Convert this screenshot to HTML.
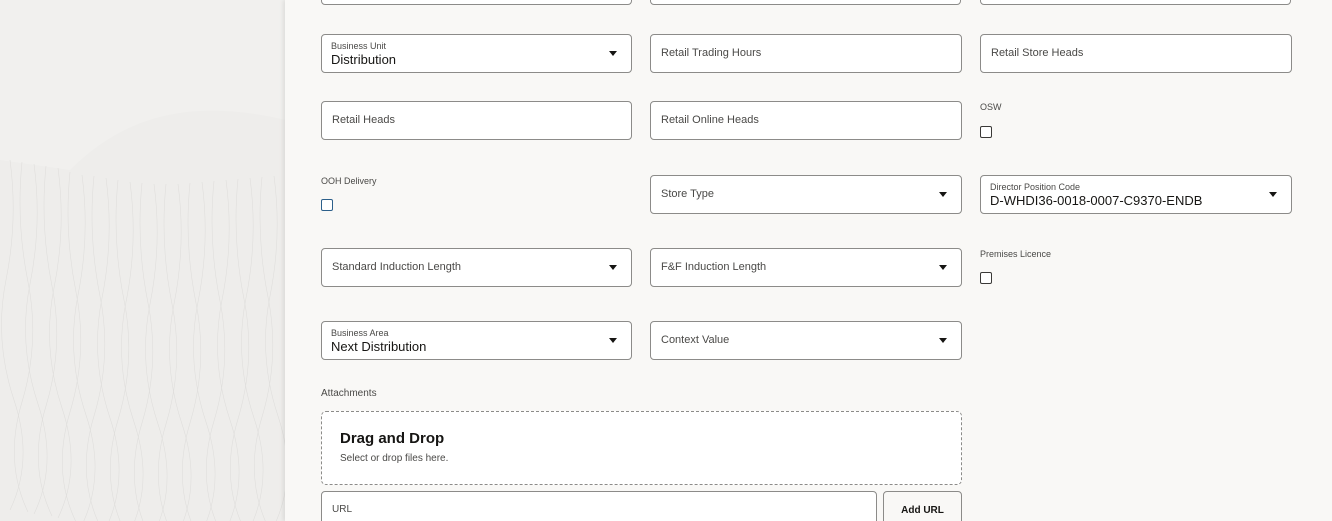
<!DOCTYPE html>
<html><head><meta charset="utf-8"><style>
*{box-sizing:border-box;margin:0;padding:0}
html{width:1332px;height:521px;overflow:hidden}
body{width:1332px;height:521px;overflow:hidden;background:#f1f0ee;font-family:"Liberation Sans",sans-serif;position:relative;color:#161513}
.bg{position:absolute;left:0;top:0;width:286px;height:521px;overflow:hidden}
.panel{position:absolute;left:285px;top:0;width:1047px;height:521px;background:#f9f8f6;box-shadow:-2px 0 4px rgba(0,0,0,.08)}
.f{position:absolute;height:39px;width:311px;background:#fff;border:1px solid #8c8b89;border-radius:4px}
.f .ph{position:absolute;left:10px;top:12px;font-size:11px;color:#4a4947}
.f .lb{position:absolute;left:9px;top:6px;font-size:9px;color:#4a4947}
.f .v{position:absolute;left:9px;top:17px;font-size:13px;color:#161513}
.f .ar{position:absolute;right:14px;top:16px;width:0;height:0;border-left:4.5px solid transparent;border-right:4.5px solid transparent;border-top:5px solid #161513}
.cl{position:absolute;font-size:9px;color:#4a4947}
.cb{position:absolute;width:12px;height:12px;border:1.5px solid #3a3937;border-radius:2px;background:#fff}
</style></head><body>
<div class="bg">
<svg width="286" height="521" viewBox="0 0 286 521">
<path d="M70 170 C130 110 200 100 286 120 L286 521 L0 521 L0 160Z" fill="#eeedeb"/>
<g fill="none" stroke="#dedddb" stroke-width="0.6" opacity="0.9">
<path d="M10 160 q8 60 -4 120 t8 120 t-4 110"/>
<path d="M22 162 q-6 60 6 120 t-6 120 t6 110"/>
<path d="M34 164 q8 60 -4 120 t8 120 t-4 110"/>
<path d="M46 166 q-6 60 6 120 t-6 120 t6 110"/>
<path d="M58 168 q8 60 -4 120 t8 120 t-4 110"/>
<path d="M70 172 q-6 60 6 120 t-6 120 t6 110"/>
<path d="M82 175 q8 60 -4 120 t8 120 t-4 110"/>
<path d="M94 176 q-6 60 6 120 t-6 120 t6 110"/>
<path d="M106 178 q8 60 -4 120 t8 120 t-4 110"/>
<path d="M118 180 q-6 60 6 120 t-6 120 t6 110"/>
<path d="M130 182 q8 60 -4 120 t8 120 t-4 110"/>
<path d="M142 183 q-6 60 6 120 t-6 120 t6 110"/>
<path d="M154 184 q8 60 -4 120 t8 120 t-4 110"/>
<path d="M166 184 q-6 60 6 120 t-6 120 t6 110"/>
<path d="M178 184 q8 60 -4 120 t8 120 t-4 110"/>
<path d="M190 183 q-6 60 6 120 t-6 120 t6 110"/>
<path d="M202 182 q8 60 -4 120 t8 120 t-4 110"/>
<path d="M214 181 q-6 60 6 120 t-6 120 t6 110"/>
<path d="M226 180 q8 60 -4 120 t8 120 t-4 110"/>
<path d="M238 179 q-6 60 6 120 t-6 120 t6 110"/>
<path d="M250 178 q8 60 -4 120 t8 120 t-4 110"/>
<path d="M262 177 q-6 60 6 120 t-6 120 t6 110"/>
<path d="M274 176 q8 60 -4 120 t8 120 t-4 110"/>
</g>
</svg>
</div>
<div class="panel"></div>

<div class="f" style="left:321px;top:-34px"></div>
<div class="f" style="left:650px;top:-34px"></div>
<div class="f" style="left:980px;top:-34px"></div>

<div class="f" style="left:321px;top:34px"><span class="lb">Business Unit</span><span class="v">Distribution</span><i class="ar"></i></div>
<div class="f" style="left:650px;top:34px;width:312px"><span class="ph">Retail Trading Hours</span></div>
<div class="f" style="left:980px;top:34px;width:312px"><span class="ph">Retail Store Heads</span></div>

<div class="f" style="left:321px;top:101px"><span class="ph">Retail Heads</span></div>
<div class="f" style="left:650px;top:101px;width:312px"><span class="ph">Retail Online Heads</span></div>
<div class="cl" style="left:980px;top:102px">OSW</div>
<div class="cb" style="left:980px;top:126px"></div>

<div class="cl" style="left:321px;top:176px">OOH Delivery</div>
<div class="cb" style="left:321px;top:199px;border-color:#2c5f8a"></div>
<div class="f" style="left:650px;top:175px;width:312px"><span class="ph">Store Type</span><i class="ar"></i></div>
<div class="f" style="left:980px;top:175px;width:312px"><span class="lb">Director Position Code</span><span class="v">D-WHDI36-0018-0007-C9370-ENDB</span><i class="ar"></i></div>

<div class="f" style="left:321px;top:248px"><span class="ph">Standard Induction Length</span><i class="ar"></i></div>
<div class="f" style="left:650px;top:248px;width:312px"><span class="ph">F&amp;F Induction Length</span><i class="ar"></i></div>
<div class="cl" style="left:980px;top:249px">Premises Licence</div>
<div class="cb" style="left:980px;top:272px"></div>

<div class="f" style="left:321px;top:321px"><span class="lb">Business Area</span><span class="v">Next Distribution</span><i class="ar"></i></div>
<div class="f" style="left:650px;top:321px;width:312px"><span class="ph">Context Value</span><i class="ar"></i></div>

<div class="cl" style="left:321px;top:388px;font-size:10px">Attachments</div>
<div style="position:absolute;left:321px;top:411px;width:641px;height:74px;background:#fff;border:1px dashed #8c8b89;border-radius:5px">
<div style="position:absolute;left:18px;top:18px;font-size:15px;font-weight:bold">Drag and Drop</div>
<div style="position:absolute;left:18px;top:41px;font-size:10px;color:#4a4947">Select or drop files here.</div>
</div>
<div class="f" style="left:321px;top:491px;width:556px;height:40px"><span class="ph" style="top:12px;font-size:10px">URL</span></div>
<div style="position:absolute;left:883px;top:491px;width:79px;height:40px;border:1px solid #8c8b89;border-radius:4px;background:#f9f8f6;font-size:10px;font-weight:bold;text-align:center;padding-top:13px">Add URL</div>
</body></html>
